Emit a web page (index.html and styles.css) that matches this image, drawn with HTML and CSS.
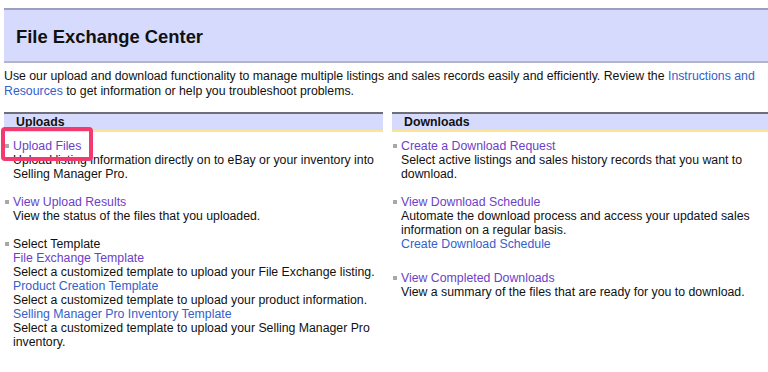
FILE: index.html
```html
<!DOCTYPE html>
<html>
<head>
<meta charset="utf-8">
<link rel="stylesheet" href="styles.css">
</head>
<body>
<div class="page">
  <div class="title-band"><h1>File Exchange Center</h1></div>
  <p class="intro">Use our upload and download functionality to manage multiple listings and sales records easily and efficiently. Review the <a class="new" href="#">Instructions and</a><br><a class="new" href="#">Resources</a> to get information or help you troubleshoot problems.</p>
  <div class="columns">
    <div class="col">
      <div class="sec-head">Uploads</div>
      <ul class="items">
        <li class="item">
          <a class="seen" href="#">Upload Files</a>
          <div>Upload listing information directly on to eBay or your inventory into Selling Manager Pro.</div>
          <span class="highlight"></span>
        </li>
        <li class="item">
          <a class="seen" href="#">View Upload Results</a>
          <div>View the status of the files that you uploaded.</div>
        </li>
        <li class="item">
          <div>Select Template</div>
          <a class="seen" href="#">File Exchange Template</a>
          <div>Select a customized template to upload your File Exchange listing.</div>
          <a class="new" href="#">Product Creation Template</a>
          <div>Select a customized template to upload your product information.</div>
          <a class="new" href="#">Selling Manager Pro Inventory Template</a>
          <div>Select a customized template to upload your Selling Manager Pro inventory.</div>
        </li>
      </ul>
    </div>
    <div class="col">
      <div class="sec-head">Downloads</div>
      <ul class="items">
        <li class="item">
          <a class="seen" href="#">Create a Download Request</a>
          <div>Select active listings and sales history records that you want to download.</div>
        </li>
        <li class="item item-wide">
          <a class="seen" href="#">View Download Schedule</a>
          <div>Automate the download process and access your updated sales information on a regular basis.</div>
          <a class="new" href="#">Create Download Schedule</a>
        </li>
        <li class="item">
          <a class="seen" href="#">View Completed Downloads</a>
          <div>View a summary of the files that are ready for you to download.</div>
        </li>
      </ul>
    </div>
  </div>
</div>
</body>
</html>
```
FILE: styles.css
```css
html, body {
  margin: 0;
  padding: 0;
  background: #ffffff;
}
body {
  font-family: "Liberation Sans", Arial, sans-serif;
  font-size: 12.3px;
  color: #111111;
  overflow: hidden;
}
.page {
  padding: 8px 0 0 4px;
  width: 800px;
}
.title-band {
  background: #d6dbfd;
  border-top: 2px solid #9d9dc6;
  border-bottom: 2px solid #b4b4c8;
  height: 51px;
  display: flex;
  align-items: center;
  padding-left: 12px;
  padding-top: 3px;
  box-sizing: border-box;
  height: 55px;
}
.title-band h1 {
  margin: 0;
  font-size: 18.4px;
  font-weight: bold;
  color: #111111;
}
.intro {
  margin: 6px 0 0 0;
  line-height: 15px;
  width: 762px;
}
a {
  text-decoration: none;
}
a.seen {
  color: #6c3fc9;
}
a.new {
  color: #3560cc;
}
.columns {
  display: flex;
  gap: 9px;
  margin-top: 13px;
  width: 764px;
}
.col {
  flex: 0 0 379px;
}
.col + .col {
  flex: 1 1 auto;
}
.sec-head {
  border-top: 2px solid #6e6e78;
  border-bottom: 2px solid #fde68e;
  background: #d6dbfd;
  height: 16px;
  line-height: 16px;
  padding-left: 12px;
  font-weight: bold;
}
.items {
  list-style: none;
  margin: 7px 0 0 0;
  padding: 0;
}
.item {
  position: relative;
  padding-left: 9px;
  line-height: 14px;
  margin-bottom: 14px;
}
.item > a {
  display: block;
}
.item::before {
  content: "";
  position: absolute;
  left: 1px;
  top: 5px;
  width: 4px;
  height: 4px;
  background: #a8a8a8;
}
.item-wide {
  margin-bottom: 20px;
}
.highlight {
  position: absolute;
  left: -3px;
  top: -12px;
  width: 84px;
  height: 26px;
  border: 4px solid #f23a6e;
  border-radius: 4px;
}
```
